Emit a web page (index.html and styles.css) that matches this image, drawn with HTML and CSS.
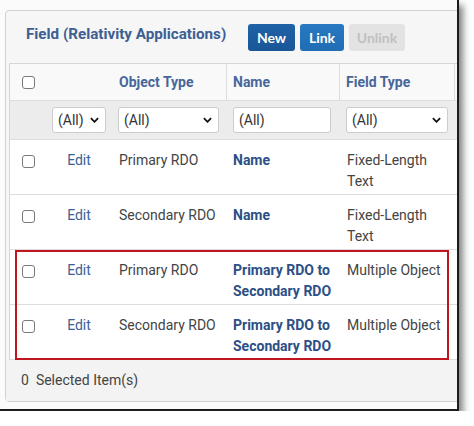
FILE: index.html
```html
<!DOCTYPE html>
<html lang="en">
<head>
<meta charset="utf-8">
<title>Field (Relativity Applications)</title>
<link rel="stylesheet" href="styles.css">
</head>
<body>
<div class="frame">
  <section class="panel">
    <header class="panel-head">
      <h1 class="title">Field (Relativity Applications)</h1>
      <div class="actions">
        <button class="btn btn-new">New</button>
        <button class="btn btn-link">Link</button>
        <button class="btn btn-disabled" disabled>Unlink</button>
      </div>
    </header>

    <div class="grid-wrap">
      <div class="grid">
        <div class="row head-row">
          <div class="cell cell-check"><span class="cb"></span></div>
          <div class="cell"></div>
          <div class="cell head-cell">Object Type</div>
          <div class="cell head-cell sep">Name</div>
          <div class="cell head-cell sep">Field Type</div>
          <div class="cell head-cell sep"></div>
        </div>

        <div class="row filter-row">
          <div class="cell"></div>
          <div class="cell fcell"><div class="sel sel-edit">(All)<svg class="chev" viewBox="0 0 10 6"><path d="M1 1 L5 5 L9 1"/></svg></div></div>
          <div class="cell fcell"><div class="sel sel-type">(All)<svg class="chev" viewBox="0 0 10 6"><path d="M1 1 L5 5 L9 1"/></svg></div></div>
          <div class="cell fcell fcell-wide"><div class="sel sel-name">(All)</div></div>
          <div class="cell fcell fcell-wide"><div class="sel sel-ftype">(All)<svg class="chev" viewBox="0 0 10 6"><path d="M1 1 L5 5 L9 1"/></svg></div></div>
          <div class="cell"></div>
        </div>

        <div class="row data-row">
          <div class="cell cell-check"><span class="cb"></span></div>
          <div class="cell cell-edit"><a class="edit">Edit</a></div>
          <div class="cell txt">Primary RDO</div>
          <div class="cell txt"><a class="name-link">Name</a></div>
          <div class="cell txt ftype">Fixed-Length Text</div>
          <div class="cell"></div>
        </div>
        <div class="row data-row">
          <div class="cell cell-check"><span class="cb"></span></div>
          <div class="cell cell-edit"><a class="edit">Edit</a></div>
          <div class="cell txt">Secondary RDO</div>
          <div class="cell txt"><a class="name-link">Name</a></div>
          <div class="cell txt ftype">Fixed-Length Text</div>
          <div class="cell"></div>
        </div>
        <div class="row data-row">
          <div class="cell cell-check"><span class="cb"></span></div>
          <div class="cell cell-edit"><a class="edit">Edit</a></div>
          <div class="cell txt">Primary RDO</div>
          <div class="cell txt"><a class="name-link">Primary RDO to Secondary RDO</a></div>
          <div class="cell txt ftype">Multiple Object</div>
          <div class="cell"></div>
        </div>
        <div class="row data-row">
          <div class="cell cell-check"><span class="cb"></span></div>
          <div class="cell cell-edit"><a class="edit">Edit</a></div>
          <div class="cell txt">Secondary RDO</div>
          <div class="cell txt"><a class="name-link">Primary RDO to Secondary RDO</a></div>
          <div class="cell txt ftype">Multiple Object</div>
          <div class="cell"></div>
        </div>
      </div>
      <div class="highlight"></div>
    </div>

    <footer class="panel-foot"><span class="count">0</span>Selected Item(s)</footer>
  </section>
</div>
</body>
</html>
```

FILE: styles.css
```css
html, body {
  margin: 0;
  padding: 0;
  background: #ffffff;
}

body {
  font-family: Roboto, "Liberation Sans", Arial, sans-serif;
  color: #444444;
}

.frame {
  box-sizing: border-box;
  width: 459px;
  height: 411px;
  padding: 10px 0 0 5px;
  background: #fbfbfb;
  border-right: 2px solid #1c1c1c;
  border-bottom: 2px solid #1c1c1c;
  box-shadow: 4px 5px 7px rgba(0, 0, 0, 0.5);
  overflow: hidden;
}

.panel {
  box-sizing: border-box;
  width: 560px;
  height: 392px;
  background: #f6f6f6;
  border: 1px solid #d2d2d2;
  border-radius: 4px;
}

.panel-head {
  box-sizing: border-box;
  height: 52px;
  padding: 13px 0 0 20px;
  display: flex;
  align-items: flex-start;
}

.title {
  flex: 0 0 222px;
  margin: 0;
  font-size: 15.2px;
  font-weight: 700;
  line-height: 20px;
  color: #3d5f93;
  white-space: nowrap;
}

.actions {
  display: flex;
  gap: 5px;
}

.btn {
  box-sizing: border-box;
  height: 27px;
  padding: 0;
  border: none;
  border-radius: 3px;
  font-family: Lato, "Open Sans", sans-serif;
  font-size: 14px;
  font-weight: 700;
  color: #ffffff;
  line-height: 27px;
  text-align: center;
}

.btn-new {
  width: 47px;
  background: linear-gradient(#1f62a7, #1a5697);
}

.btn-link {
  width: 44px;
  background: linear-gradient(#2779c2, #216db4);
}

.btn-disabled {
  width: 56px;
  background: #e3e3e3;
  color: #c0c0c0;
}

.grid-wrap {
  position: relative;
  margin-left: 3px;
}

.grid {
  border-top: 1px solid #d6d6d6;
  border-left: 1px solid #d6d6d6;
  background: #ffffff;
}

.row {
  display: grid;
  grid-template-columns: 36px 66px 114px 113px 115px 100px;
  box-sizing: border-box;
  border-bottom: 1px solid #dddddd;
}

.cell {
  box-sizing: border-box;
  min-width: 0;
}

.head-row {
  height: 37px;
  background: #f9f9f9;
  align-items: stretch;
}

.head-cell {
  display: flex;
  align-items: center;
  padding-left: 7px;
  font-size: 14px;
  font-weight: 700;
  color: #47669a;
}

.head-cell.sep {
  border-left: 1px solid #dddddd;
  padding-left: 6px;
}

.cell-check {
  display: flex;
  justify-content: center;
}

.head-row .cell-check {
  align-items: center;
}

.cb {
  box-sizing: border-box;
  display: block;
  width: 13px;
  height: 13px;
  border: 1.5px solid #7a7a7a;
  border-radius: 3px;
  background: #ffffff;
}

.filter-row {
  height: 39px;
  background: #ececec;
  align-items: center;
}

.fcell {
  padding-left: 6px;
}

.fcell-wide {
  padding-left: 7px;
}

.sel {
  box-sizing: border-box;
  height: 26px;
  display: flex;
  align-items: center;
  justify-content: space-between;
  padding: 0 6px 0 5px;
  background: #ffffff;
  border: 1px solid #cccccc;
  border-radius: 3px;
  font-size: 14px;
  color: #333333;
}

.sel-edit { width: 54px; }
.sel-type { width: 101px; }
.sel-name { width: 98px; }
.sel-ftype { width: 102px; }

.chev {
  width: 9px;
  height: 6px;
  fill: none;
  stroke: #111111;
  stroke-width: 2;
}

.data-row {
  height: 55px;
  align-items: start;
}

.data-row .cell-check {
  padding-top: 15px;
}

.data-row .txt,
.cell-edit {
  padding-top: 10px;
  font-size: 14px;
  line-height: 21px;
}

.txt {
  padding-left: 7px;
  padding-right: 2px;
}

.ftype {
  padding-left: 8px;
}

.cell-edit {
  text-align: center;
}

.edit {
  color: #3b6194;
  text-decoration: none;
}

.name-link {
  color: #2c4f86;
  font-weight: 700;
  text-decoration: none;
}

.highlight {
  position: absolute;
  left: 6px;
  top: 187px;
  width: 434px;
  height: 110px;
  box-sizing: border-box;
  border: 2px solid #c0141f;
  pointer-events: none;
}

.panel-foot {
  height: 41px;
  line-height: 41px;
  padding-left: 15px;
  background: #f3f3f3;
  font-size: 14px;
  color: #444444;
}

.count {
  margin-right: 7px;
}
```
